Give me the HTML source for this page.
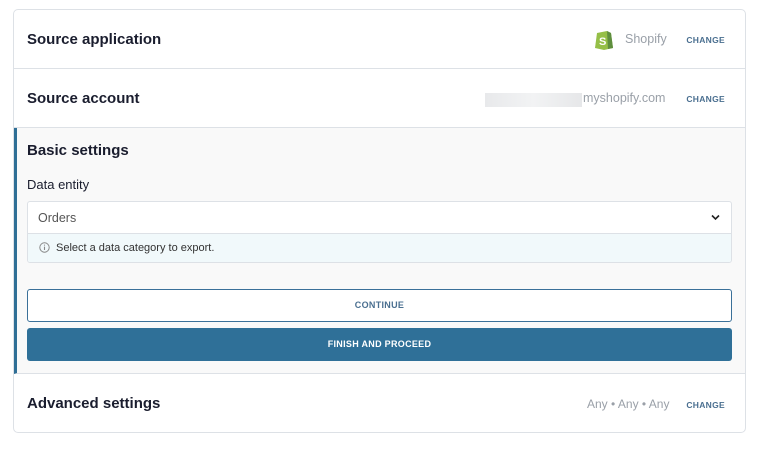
<!DOCTYPE html>
<html><head><style>
*{box-sizing:border-box;margin:0;padding:0}
body{width:768px;height:450px;background:#fff;font-family:"Liberation Sans",sans-serif;position:relative;overflow:hidden}
.card{position:absolute;left:13px;top:9px;width:733px;height:424px;border:1px solid #dde1e6;border-radius:5px;overflow:hidden}
.row{position:absolute;left:0;width:731px;height:59px;border-bottom:1px solid #dde1e6}
.t{position:absolute;left:13px;font-size:15px;font-weight:bold;color:#1a1d2e}
.ch{position:absolute;right:20px;font-size:8.5px;font-weight:bold;color:#4a6f90;letter-spacing:.3px}
.g{position:absolute;font-size:12.5px;color:#9aa0a8}
</style></head><body>
<div class="card">
 <div class="row" style="top:0">
  <div class="t" style="top:21px">Source application</div>
  <svg style="position:absolute;left:580px;top:18px" width="20" height="22" viewBox="0 0 20 22"><path d="M3 5 L13 3 L17 5 L19 20 L10 22 L1 20Z" fill="#95bf47"/><path d="M13 3 L17 5 L19 20 L14 21Z" fill="#5e8e3e"/><text x="5" y="17" font-size="11" font-weight="bold" fill="#fff" font-family="Liberation Sans">S</text></svg>
  <div class="g" style="left:611px;top:22px">Shopify</div>
  <div class="ch" style="top:25px">CHANGE</div>
 </div>
 <div class="row" style="top:59px">
  <div class="t" style="top:21px">Source account</div>
  <div style="position:absolute;left:471px;top:24px;width:97px;height:14px;background:linear-gradient(90deg,#e8e9eb,#f2f3f4,#e6e7e9)"></div>
  <div class="g" style="left:569px;top:22px">myshopify.com</div>
  <div class="ch" style="top:25px">CHANGE</div>
 </div>
 <div style="position:absolute;left:0;top:118px;width:731px;height:246px;background:#f9f9f9;border-left:3px solid #2f6f96;border-bottom:1px solid #dde1e6">
  <div class="t" style="left:10px;top:14px">Basic settings</div>
  <div style="position:absolute;left:10px;top:49px;font-size:13px;color:#1a1d2e">Data entity</div>
  <div style="position:absolute;left:10px;top:73px;width:705px;height:62px;border:1px solid #dde1e6;border-radius:3px;background:#fff;overflow:hidden">
   <div style="position:absolute;left:10px;top:9px;font-size:12.5px;color:#555">Orders</div>
   <svg style="position:absolute;right:11px;top:12px" width="9" height="7" viewBox="0 0 9 7"><path d="M1 1.5 L4.5 5 L8 1.5" fill="none" stroke="#222" stroke-width="1.6"/></svg>
   <div style="position:absolute;left:0;top:31px;width:100%;height:31px;background:#f1f9fb;border-top:1px solid #dde1e6">
    <svg style="position:absolute;left:11px;top:8px" width="11" height="11" viewBox="0 0 11 11"><circle cx="5.5" cy="5.5" r="4.7" fill="none" stroke="#888" stroke-width="1"/><path d="M5.5 4.6V8M5.5 2.6v1" stroke="#888" stroke-width="1.1"/></svg>
    <div style="position:absolute;left:28px;top:8px;font-size:11px;color:#333">Select a data category to export.</div>
   </div>
  </div>
  <div style="position:absolute;left:10px;top:161px;width:705px;height:33px;border:1px solid #3a7099;border-radius:3px;background:#fff;text-align:center;line-height:31px;font-size:9px;font-weight:bold;color:#4a6f90;letter-spacing:.3px">CONTINUE</div>
  <div style="position:absolute;left:10px;top:200px;width:705px;height:33px;border-radius:3px;background:#2f7098;text-align:center;line-height:33px;font-size:9px;font-weight:bold;color:#fff;letter-spacing:.3px">FINISH AND PROCEED</div>
 </div>
 <div class="row" style="top:364px;border-bottom:none">
  <div class="t" style="top:21px">Advanced settings</div>
  <div class="g" style="left:573px;top:23px;font-size:12px">Any • Any • Any</div>
  <div class="ch" style="top:26px">CHANGE</div>
 </div>
</div>
</body></html>
